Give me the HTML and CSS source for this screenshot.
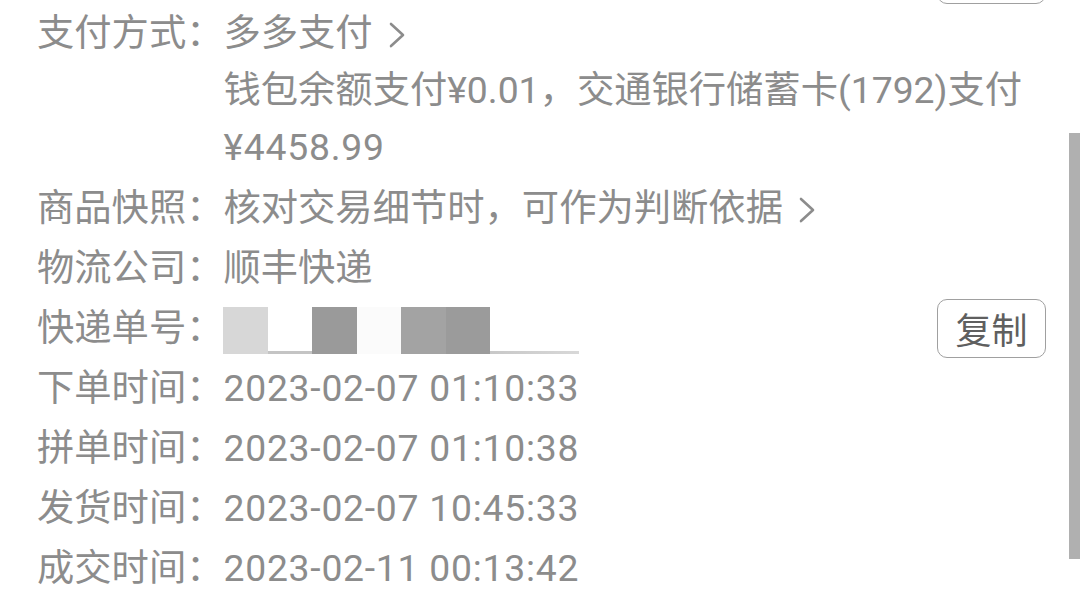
FILE: index.html
```html
<!DOCTYPE html>
<html lang="zh-CN">
<head>
<meta charset="utf-8">
<link rel="stylesheet" href="styles.css">
</head>
<body>
<div class="page">
  <div class="list">
    <div class="row row-prev">
      <span class="label"></span>
      <div class="value"></div>
      <span class="copy copy-empty"></span>
    </div>
    <div class="row row-pay">
      <span class="label">支付方式：</span>
      <div class="value">多多支付<svg class="chev" viewBox="0 0 16 26" width="16" height="26"><path d="M2 2 L14 13 L2 24" fill="none" stroke="#8c8c8c" stroke-width="2.6" stroke-linecap="round" stroke-linejoin="round"/></svg><br>钱包余额支付¥0.01，交通银行储蓄卡(1792)支付 <span class="num">¥4458.99</span></div>
    </div>
    <div class="row">
      <span class="label">商品快照：</span>
      <div class="value">核对交易细节时，可作为判断依据<svg class="chev" viewBox="0 0 16 26" width="16" height="26"><path d="M2 2 L14 13 L2 24" fill="none" stroke="#8c8c8c" stroke-width="2.6" stroke-linecap="round" stroke-linejoin="round"/></svg></div>
    </div>
    <div class="row">
      <span class="label">物流公司：</span>
      <div class="value">顺丰快递</div>
    </div>
    <div class="row">
      <span class="label">快递单号：</span>
      <div class="value">
        <span class="mosaic">
          <i class="px px-a"></i><i class="px px-line"></i><i class="px px-b"></i><i class="px px-c"></i><i class="px px-d"></i><i class="px px-e"></i><i class="px px-tail"></i>
        </span>
      </div>
      <button class="copy">复制</button>
    </div>
    <div class="row">
      <span class="label">下单时间：</span>
      <div class="value num">2023-02-07 01:10:33</div>
    </div>
    <div class="row">
      <span class="label">拼单时间：</span>
      <div class="value num">2023-02-07 01:10:38</div>
    </div>
    <div class="row">
      <span class="label">发货时间：</span>
      <div class="value num">2023-02-07 10:45:33</div>
    </div>
    <div class="row">
      <span class="label">成交时间：</span>
      <div class="value num">2023-02-11 00:13:42</div>
    </div>
  </div>
  <div class="scrollbar"></div>
</div>
</body>
</html>
```
FILE: styles.css
```css
* { box-sizing: border-box; }
html, body {
  margin: 0;
  padding: 0;
  background: #ffffff;
  overflow: hidden;
}
.page {
  position: relative;
  width: 1080px;
  height: 601px;
  overflow: hidden;
  font-family: Roboto, "Noto Sans CJK SC", sans-serif;
  font-size: 37.3px;
  color: #8c8c8c;
}
.list {
  padding-left: 37px;
  padding-right: 34px;
}
.row {
  display: flex;
  align-items: flex-start;
  line-height: 60px;
  min-height: 60px;
}
.row-prev {
  margin-top: -56px;
  margin-bottom: 1px;
}
.row-pay {
  line-height: 57px;
  margin-bottom: 2px;
}
.label {
  flex: 0 0 186px;
  white-space: nowrap;
}
.value {
  flex: 1 1 auto;
  min-width: 0;
}
.num {
  letter-spacing: 0.75px;
}
.chev {
  display: inline-block;
  margin-left: 16px;
  vertical-align: -2px;
}
.copy {
  flex: 0 0 auto;
  align-self: center;
  width: 109px;
  height: 59px;
  padding: 0;
  border: 1.5px solid #a0a0a0;
  border-radius: 10px;
  background: #ffffff;
  font-family: "Noto Sans CJK SC", sans-serif;
  font-size: 36px;
  line-height: 54px;
  color: #5f5f5f;
}
.copy-empty {
  display: block;
}
.mosaic {
  display: inline-flex;
  align-items: flex-end;
  height: 47px;
  vertical-align: middle;
  margin-top: -1px;
  letter-spacing: 0;
}
.px {
  display: block;
  width: 44.5px;
  height: 47px;
}
.px-a { background: #d7d7d7; }
.px-line { height: 3px; background: #c4c4c4; }
.px-b { background: #9a9a9a; }
.px-c { background: #fbfbfb; }
.px-d { background: #a3a3a3; }
.px-e { background: #9b9b9b; }
.px-tail { width: 89px; height: 3px; background: linear-gradient(to right, #c8c8c8, #d8d8d8); }
.scrollbar {
  position: absolute;
  left: 1069px;
  top: 133px;
  width: 11px;
  height: 426px;
  background: #b0b0b0;
}
```
